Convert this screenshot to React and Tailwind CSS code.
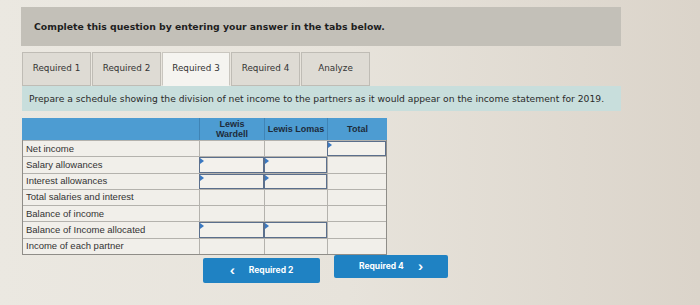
import React from "react";

const rows = [
  { label: "Net income", inputs: [false, false, true] },
  { label: "Salary allowances", inputs: [true, true, false] },
  { label: "Interest allowances", inputs: [true, true, false] },
  { label: "Total salaries and interest", inputs: [false, false, false] },
  { label: "Balance of income", inputs: [false, false, false] },
  { label: "Balance of Income allocated", inputs: [true, true, false] },
  { label: "Income of each partner", inputs: [false, false, false] },
];

const tabs = ["Required 1", "Required 2", "Required 3", "Required 4", "Analyze"];

const Cell = ({ input }) =>
  input ? (
    <div className="relative h-full border-[1.5px] border-[#5b6f8c] bg-[#f3f1ec]">
      <span className="absolute left-0 top-0 h-0 w-0 border-y-[3px] border-l-[4px] border-y-transparent border-l-[#3a78c0]" />
    </div>
  ) : (
    <div className="h-full border-l border-[#b4b2ad] bg-[#f1efea]" />
  );

const App = () => {
  return (
    <div className="h-[305px] w-[700px] overflow-hidden bg-gradient-to-r from-[#ebe8e1] via-[#e7e3db] to-[#dbd4ca] pt-[7px] font-['DejaVu_Sans',sans-serif] text-[#222]">
      <div className="ml-[21px] flex h-[39px] w-[600px] items-center bg-[#c3c0b8] pl-[13px]">
        <p className="text-[9.3px] font-bold text-[#1e1e1e]">
          Complete this question by entering your answer in the tabs below.
        </p>
      </div>

      <div className="ml-[22px] mt-[6px] flex h-[34px] gap-[1px]">
        {tabs.map((t) => (
          <div
            key={t}
            className={
              t === "Required 3"
                ? "flex w-[68px] items-center justify-center border border-b-transparent border-[#c9c6bf] bg-[#f5f4f0] text-[8.8px] text-[#333]"
                : "flex w-[69px] items-center justify-center border border-[#bfbcb5] bg-[#dedbd4] text-[8.8px] text-[#333]"
            }
          >
            {t}
          </div>
        ))}
      </div>

      <div className="ml-[22px] flex h-[25px] w-[599px] items-center bg-[#c8dedc] pl-[7px]">
        <p className="whitespace-nowrap text-[9.2px] text-[#2a2a2a]">
          Prepare a schedule showing the division of net income to the partners as it would appear on the income statement for 2019.
        </p>
      </div>

      <div className="ml-[22px] mt-[7px] w-[365px] font-['Liberation_Sans',sans-serif]">
        <div className="grid h-[22px] grid-cols-[177px_65px_63px_60px] bg-[#4d9cd2] text-[9px] font-bold leading-[10px] text-[#1d2b3a]">
          <div />
          <div className="flex items-center justify-center border-l border-[#3f84b6] text-center">
            Lewis
            <br />
            Wardell
          </div>
          <div className="flex items-center justify-center border-l border-[#3f84b6]">Lewis Lomas</div>
          <div className="flex items-center justify-center border-l border-[#3f84b6]">Total</div>
        </div>
        <div className="border-x border-b border-[#8f8d88]">
          {rows.map((r) => (
            <div
              key={r.label}
              className="grid h-[16.3px] grid-cols-[176px_65px_63px_59px] border-t border-[#b4b2ad] text-[9.5px] text-[#333]"
            >
              <div className="flex items-center bg-[#f1efea] pl-[3px]">{r.label}</div>
              {r.inputs.map((inp, i) => (
                <Cell key={i} input={inp} />
              ))}
            </div>
          ))}
        </div>
      </div>

      <div className="ml-[203px] flex items-start gap-[14px] font-['Inter',sans-serif] text-[8.5px] font-bold text-white">
        <button className="mt-[3px] flex h-[25px] w-[117px] items-center justify-center gap-[14px] rounded-[2px] bg-[#1f82c3]">
          <span className="text-[12px] font-bold">‹</span>
          <span>Required 2</span>
        </button>
        <button className="flex h-[23px] w-[114px] items-center justify-center gap-[14px] rounded-[2px] bg-[#1f82c3]">
          <span>Required 4</span>
          <span className="text-[12px] font-bold">›</span>
        </button>
      </div>
    </div>
  );
};

export default App;
